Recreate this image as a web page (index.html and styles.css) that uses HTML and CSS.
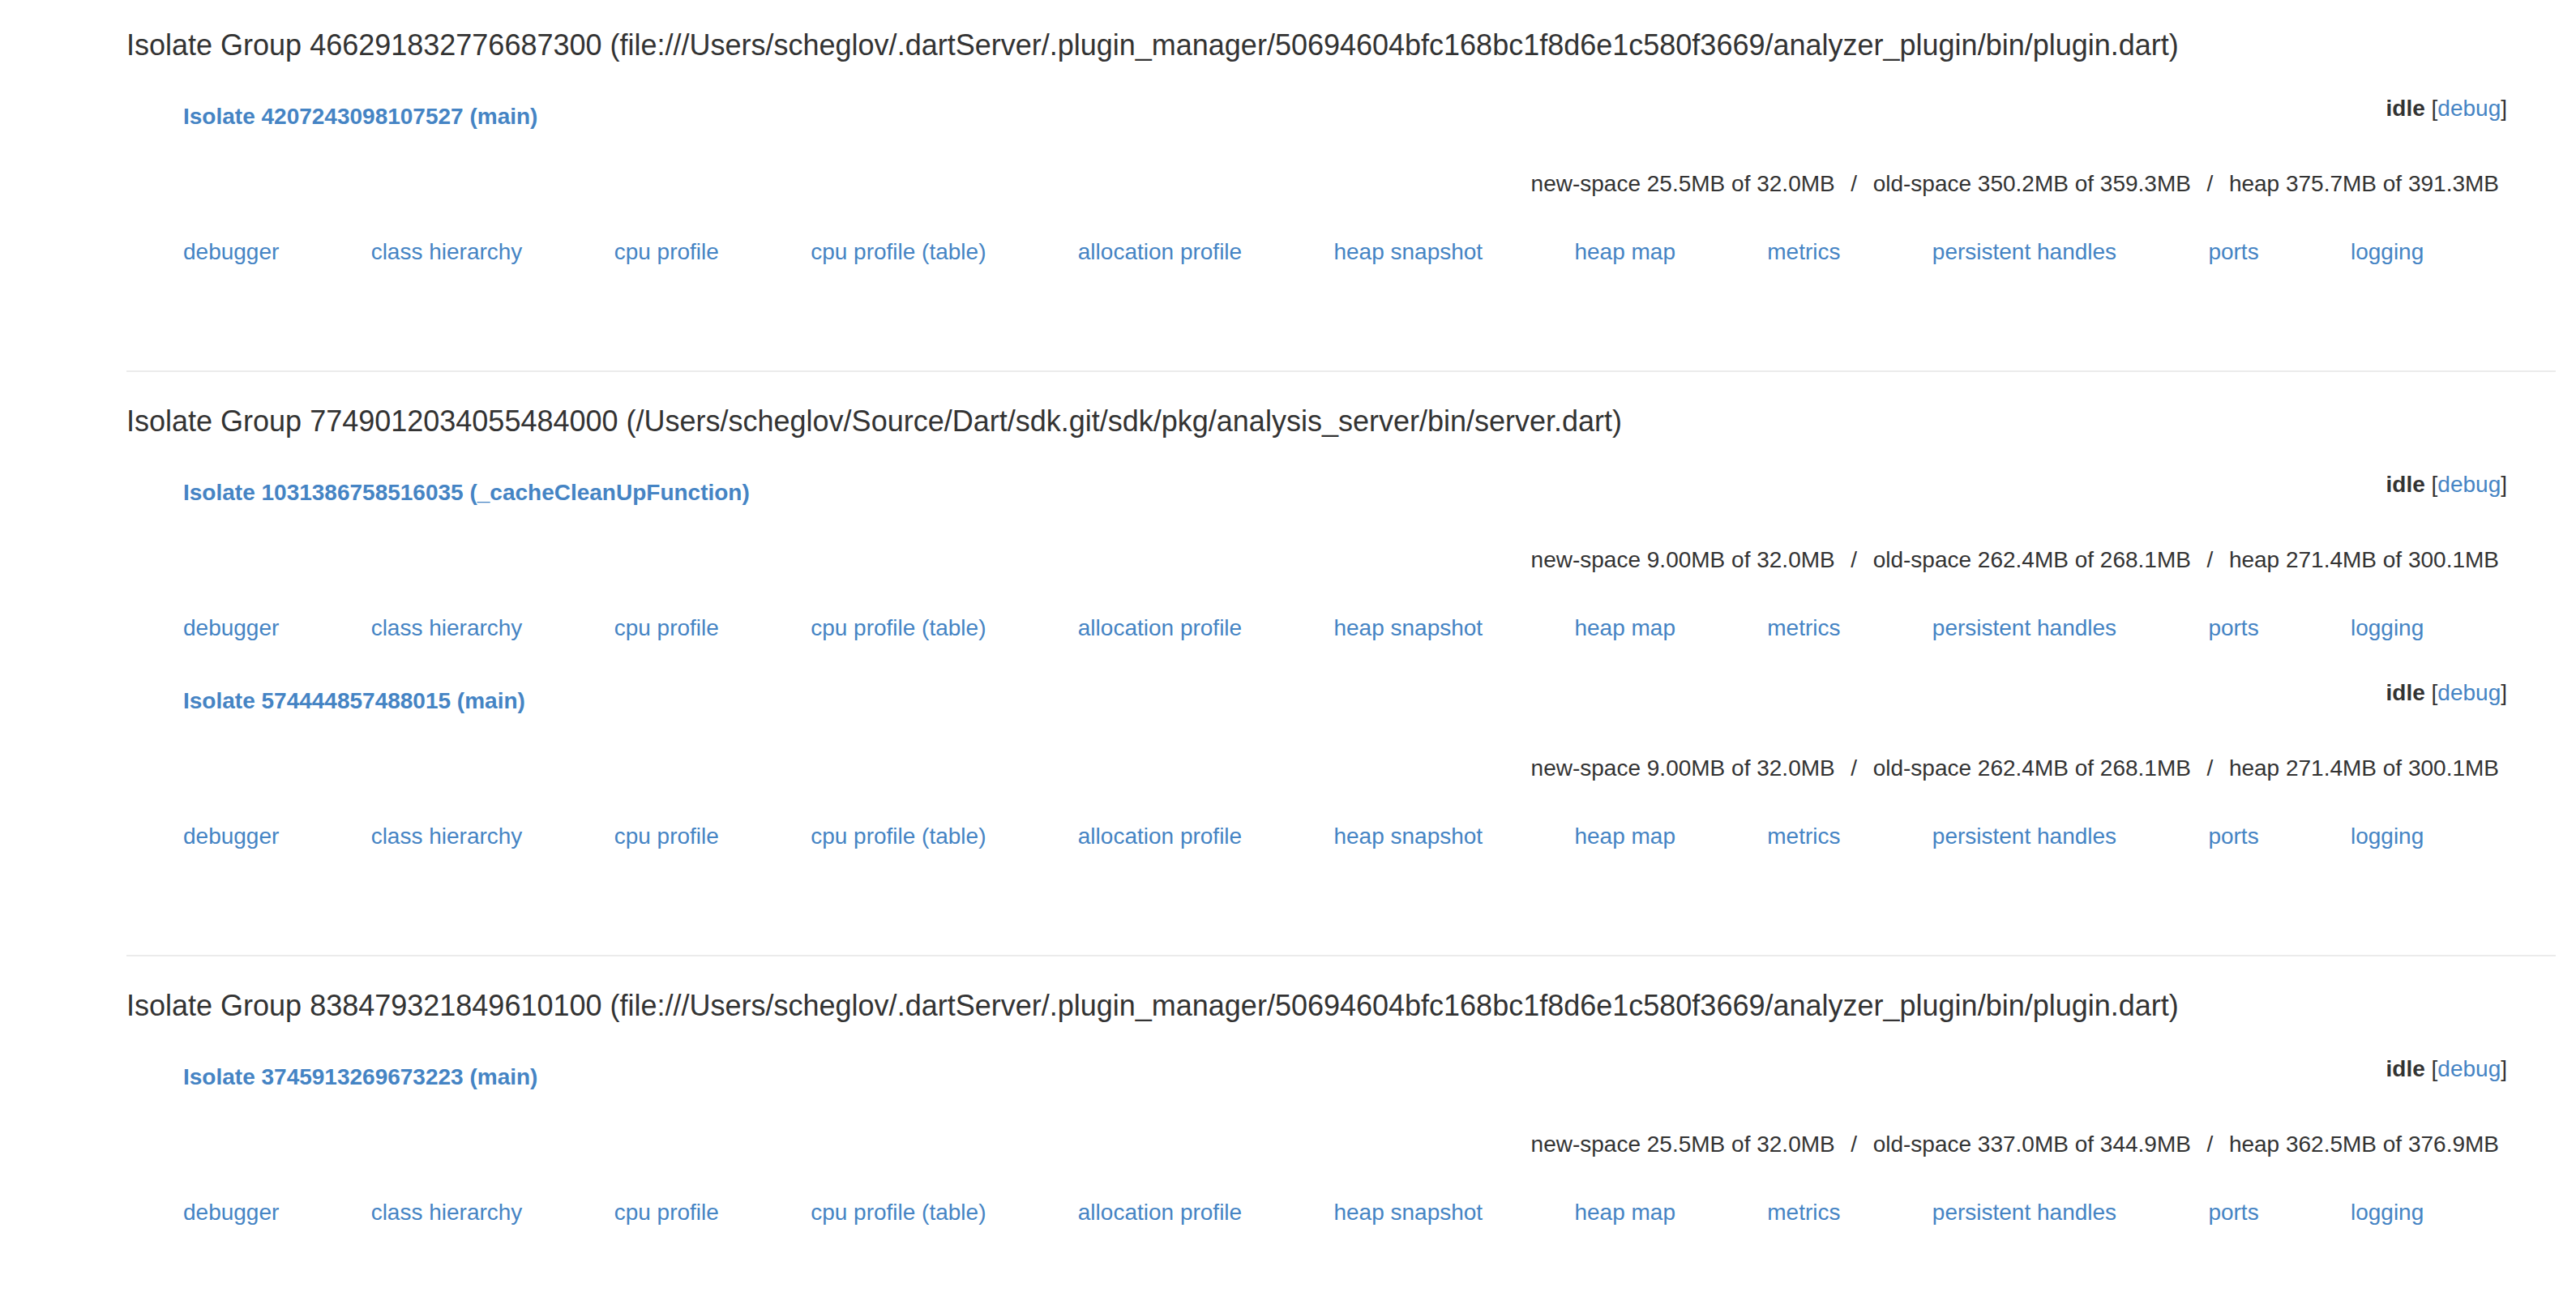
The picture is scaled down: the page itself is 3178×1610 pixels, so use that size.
FILE: index.html
```html
<!DOCTYPE html>
<html lang="en">
<head>
<meta charset="utf-8">
<title>Isolate Groups</title>
<link rel="stylesheet" href="styles.css">
</head>
<body>
<main class="page">
  <section class="group">
    <h1 class="group-title">Isolate Group 466291832776687300 (file:///Users/scheglov/.dartServer/.plugin_manager/50694604bfc168bc1f8d6e1c580f3669/analyzer_plugin/bin/plugin.dart)</h1>
    <div class="isolate">
      <div class="isolate-head">
        <a class="isolate-name" href="#">Isolate 4207243098107527 (main)</a>
        <div class="isolate-state"><b>idle</b> [<a href="#">debug</a>]</div>
      </div>
      <div class="isolate-memory">new-space 25.5MB of 32.0MB<span class="sep">/</span>old-space 350.2MB of 359.3MB<span class="sep">/</span>heap 375.7MB of 391.3MB</div>
      <nav class="isolate-links">
        <a href="#">debugger</a><a href="#">class hierarchy</a><a href="#">cpu profile</a><a href="#">cpu profile (table)</a><a href="#">allocation profile</a><a href="#">heap snapshot</a><a href="#">heap map</a><a href="#">metrics</a><a href="#">persistent handles</a><a href="#">ports</a><a href="#">logging</a>
      </nav>
    </div>
  </section>

  <section class="group">
    <h1 class="group-title">Isolate Group 7749012034055484000 (/Users/scheglov/Source/Dart/sdk.git/sdk/pkg/analysis_server/bin/server.dart)</h1>
    <div class="isolate">
      <div class="isolate-head">
        <a class="isolate-name" href="#">Isolate 1031386758516035 (_cacheCleanUpFunction)</a>
        <div class="isolate-state"><b>idle</b> [<a href="#">debug</a>]</div>
      </div>
      <div class="isolate-memory">new-space 9.00MB of 32.0MB<span class="sep">/</span>old-space 262.4MB of 268.1MB<span class="sep">/</span>heap 271.4MB of 300.1MB</div>
      <nav class="isolate-links">
        <a href="#">debugger</a><a href="#">class hierarchy</a><a href="#">cpu profile</a><a href="#">cpu profile (table)</a><a href="#">allocation profile</a><a href="#">heap snapshot</a><a href="#">heap map</a><a href="#">metrics</a><a href="#">persistent handles</a><a href="#">ports</a><a href="#">logging</a>
      </nav>
    </div>
    <div class="isolate">
      <div class="isolate-head">
        <a class="isolate-name" href="#">Isolate 574444857488015 (main)</a>
        <div class="isolate-state"><b>idle</b> [<a href="#">debug</a>]</div>
      </div>
      <div class="isolate-memory">new-space 9.00MB of 32.0MB<span class="sep">/</span>old-space 262.4MB of 268.1MB<span class="sep">/</span>heap 271.4MB of 300.1MB</div>
      <nav class="isolate-links">
        <a href="#">debugger</a><a href="#">class hierarchy</a><a href="#">cpu profile</a><a href="#">cpu profile (table)</a><a href="#">allocation profile</a><a href="#">heap snapshot</a><a href="#">heap map</a><a href="#">metrics</a><a href="#">persistent handles</a><a href="#">ports</a><a href="#">logging</a>
      </nav>
    </div>
  </section>

  <section class="group">
    <h1 class="group-title">Isolate Group 838479321849610100 (file:///Users/scheglov/.dartServer/.plugin_manager/50694604bfc168bc1f8d6e1c580f3669/analyzer_plugin/bin/plugin.dart)</h1>
    <div class="isolate">
      <div class="isolate-head">
        <a class="isolate-name" href="#">Isolate 3745913269673223 (main)</a>
        <div class="isolate-state"><b>idle</b> [<a href="#">debug</a>]</div>
      </div>
      <div class="isolate-memory">new-space 25.5MB of 32.0MB<span class="sep">/</span>old-space 337.0MB of 344.9MB<span class="sep">/</span>heap 362.5MB of 376.9MB</div>
      <nav class="isolate-links">
        <a href="#">debugger</a><a href="#">class hierarchy</a><a href="#">cpu profile</a><a href="#">cpu profile (table)</a><a href="#">allocation profile</a><a href="#">heap snapshot</a><a href="#">heap map</a><a href="#">metrics</a><a href="#">persistent handles</a><a href="#">ports</a><a href="#">logging</a>
      </nav>
    </div>
  </section>
</main>
</body>
</html>
```

FILE: styles.css
```css
html, body {
  margin: 0;
  padding: 0;
  background: #ffffff;
}

body {
  font-family: "Liberation Sans", Arial, Helvetica, sans-serif;
  font-size: 28px;
  line-height: 32px;
  color: #333333;
}

a {
  color: #4584c4;
  text-decoration: none;
}

.page {
  padding: 36px 25px 0 156px;
}

.group + .group {
  border-top: 2px solid #ebebeb;
  margin-top: 130px;
  padding-top: 41px;
}

.group-title {
  margin: 0;
  font-size: 36px;
  line-height: 40px;
  font-weight: normal;
  color: #333333;
  white-space: nowrap;
}

.isolate {
  padding: 0 60px 0 70px;
  margin-top: 42px;
}

.isolate + .isolate {
  margin-top: 48px;
}

.isolate-head {
  display: flex;
  justify-content: space-between;
  align-items: flex-start;
}

.isolate-name {
  padding-top: 10px;
  font-weight: bold;
}

.isolate-state b {
  font-weight: bold;
  color: #333333;
}

.isolate-memory {
  margin-top: 51px;
  margin-right: 10px;
  text-align: right;
  white-space: nowrap;
}

.sep {
  margin: 0 19.6px;
}

.isolate-links {
  display: flex;
  gap: 113.3px;
  margin-top: 52px;
  white-space: nowrap;
}
```
